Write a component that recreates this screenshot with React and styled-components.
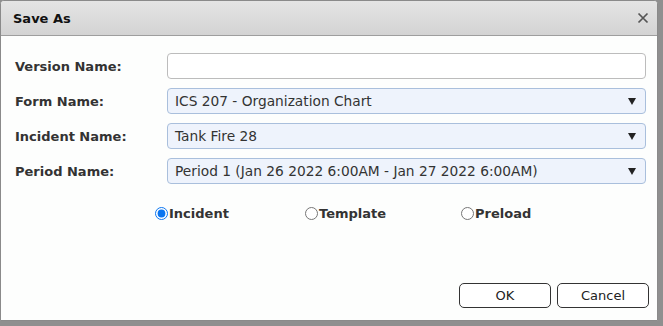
import React from 'react'
import styled, { createGlobalStyle } from 'styled-components'

const Global = createGlobalStyle`
  html, body {
    margin: 0;
    padding: 0;
    background: #8c8c8c;
    font-family: "DejaVu Sans", Verdana, sans-serif;
  }
`

const Page = styled.div`
  width: 663px;
  height: 326px;
  overflow: hidden;
  background: #8f8f8f;
`

const Dialog = styled.div`
  width: 658px;
  height: 321px;
  box-sizing: border-box;
  background: #fdfefd;
  border: 1px solid #8a8a8a;
  border-radius: 4px 4px 0 0;
  display: flex;
  flex-direction: column;
`

const TitleBar = styled.div`
  height: 35px;
  box-sizing: border-box;
  display: flex;
  align-items: center;
  justify-content: space-between;
  padding: 0 6px 0 12px;
  background: linear-gradient(#e4e4e4, #d3d3d3);
  border-bottom: 1px solid #9e9e9e;
  border-radius: 3px 3px 0 0;
`

const Title = styled.span`
  font-size: 13px;
  font-weight: bold;
  color: #111;
`

const Close = styled.button`
  border: 0;
  background: transparent;
  padding: 0;
  width: 16px;
  height: 16px;
  display: flex;
  align-items: center;
  justify-content: center;
  cursor: pointer;
`

const Body = styled.div`
  flex: 1;
  display: flex;
  flex-direction: column;
  padding: 17px 12px 12px 14px;
`

const Form = styled.div`
  display: grid;
  grid-template-columns: 152px 479px;
  row-gap: 9px;
  align-items: center;
`

const Label = styled.label`
  font-size: 13px;
  font-weight: bold;
  color: #333;
`

const Field = styled.div`
  height: 26px;
  box-sizing: border-box;
  border: 1px solid ${p => (p.$select ? '#a9bfdc' : '#bcbcbc')};
  border-radius: 4px;
  background: ${p => (p.$select ? '#eef3fc' : '#fff')};
  display: flex;
  align-items: center;
  justify-content: space-between;
  padding: 0 9px 0 7px;
  font-size: 13.75px;
  color: #333;
`

const Arrow = styled.span`
  width: 0;
  height: 0;
  border-left: 4px solid transparent;
  border-right: 4px solid transparent;
  border-top: 7px solid #222;
`

const Radios = styled.div`
  display: grid;
  grid-template-columns: 150px 156px 120px;
  margin: 22px 0 0 140px;
`

const RadioLabel = styled.label`
  display: flex;
  align-items: center;
  font-size: 13px;
  font-weight: bold;
  color: #333;
`

const Radio = styled.input`
  margin: 0 1px 0 0;
  width: 13px;
  height: 13px;
  accent-color: #0a75f0;
`

const Footer = styled.div`
  margin-top: auto;
  margin-right: -4px;
  display: flex;
  justify-content: flex-end;
  gap: 6px;
`

const Button = styled.button`
  width: 92px;
  height: 25px;
  border: 1px solid #333;
  border-radius: 5px;
  background: #fff;
  font-family: "DejaVu Sans", Verdana, sans-serif;
  font-size: 13px;
  color: #222;
`

const selects = [
  { label: 'Form Name:', value: 'ICS 207 - Organization Chart' },
  { label: 'Incident Name:', value: 'Tank Fire 28' },
  { label: 'Period Name:', value: 'Period 1 (Jan 26 2022 6:00AM - Jan 27 2022 6:00AM)' },
]

const App = () => {
  return (
    <Page>
      <Global />
      <Dialog>
        <TitleBar>
          <Title>Save As</Title>
          <Close aria-label="Close">
            <svg width="12" height="12" viewBox="0 0 12 12">
              <path d="M1.5 1.5 L10.5 10.5 M10.5 1.5 L1.5 10.5" stroke="#555" strokeWidth="1.7" />
            </svg>
          </Close>
        </TitleBar>
        <Body>
          <Form>
            <Label>Version Name:</Label>
            <Field />
            {selects.map(s => (
              <React.Fragment key={s.label}>
                <Label>{s.label}</Label>
                <Field $select>
                  <span>{s.value}</span>
                  <Arrow />
                </Field>
              </React.Fragment>
            ))}
          </Form>
          <Radios>
            <RadioLabel><Radio type="radio" name="kind" defaultChecked />Incident</RadioLabel>
            <RadioLabel><Radio type="radio" name="kind" />Template</RadioLabel>
            <RadioLabel><Radio type="radio" name="kind" />Preload</RadioLabel>
          </Radios>
          <Footer>
            <Button>OK</Button>
            <Button>Cancel</Button>
          </Footer>
        </Body>
      </Dialog>
    </Page>
  )
}

export default App
